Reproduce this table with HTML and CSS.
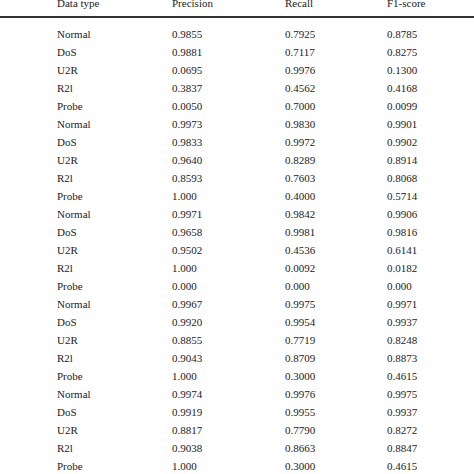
FILE: index.html
```html
<!DOCTYPE html>
<html>
<head>
<meta charset="utf-8">
<link rel="stylesheet" href="styles.css">
</head>
<body>
<div class="table">
  <div class="row head">
    <span>Data type</span><span>Precision</span><span>Recall</span><span>F1-score</span>
  </div>
  <div class="body">
    <div class="row"><span>Normal</span><span>0.9855</span><span>0.7925</span><span>0.8785</span></div>
    <div class="row"><span>DoS</span><span>0.9881</span><span>0.7117</span><span>0.8275</span></div>
    <div class="row"><span>U2R</span><span>0.0695</span><span>0.9976</span><span>0.1300</span></div>
    <div class="row"><span>R2l</span><span>0.3837</span><span>0.4562</span><span>0.4168</span></div>
    <div class="row"><span>Probe</span><span>0.0050</span><span>0.7000</span><span>0.0099</span></div>
    <div class="row"><span>Normal</span><span>0.9973</span><span>0.9830</span><span>0.9901</span></div>
    <div class="row"><span>DoS</span><span>0.9833</span><span>0.9972</span><span>0.9902</span></div>
    <div class="row"><span>U2R</span><span>0.9640</span><span>0.8289</span><span>0.8914</span></div>
    <div class="row"><span>R2l</span><span>0.8593</span><span>0.7603</span><span>0.8068</span></div>
    <div class="row"><span>Probe</span><span>1.000</span><span>0.4000</span><span>0.5714</span></div>
    <div class="row"><span>Normal</span><span>0.9971</span><span>0.9842</span><span>0.9906</span></div>
    <div class="row"><span>DoS</span><span>0.9658</span><span>0.9981</span><span>0.9816</span></div>
    <div class="row"><span>U2R</span><span>0.9502</span><span>0.4536</span><span>0.6141</span></div>
    <div class="row"><span>R2l</span><span>1.000</span><span>0.0092</span><span>0.0182</span></div>
    <div class="row"><span>Probe</span><span>0.000</span><span>0.000</span><span>0.000</span></div>
    <div class="row"><span>Normal</span><span>0.9967</span><span>0.9975</span><span>0.9971</span></div>
    <div class="row"><span>DoS</span><span>0.9920</span><span>0.9954</span><span>0.9937</span></div>
    <div class="row"><span>U2R</span><span>0.8855</span><span>0.7719</span><span>0.8248</span></div>
    <div class="row"><span>R2l</span><span>0.9043</span><span>0.8709</span><span>0.8873</span></div>
    <div class="row"><span>Probe</span><span>1.000</span><span>0.3000</span><span>0.4615</span></div>
    <div class="row"><span>Normal</span><span>0.9974</span><span>0.9976</span><span>0.9975</span></div>
    <div class="row"><span>DoS</span><span>0.9919</span><span>0.9955</span><span>0.9937</span></div>
    <div class="row"><span>U2R</span><span>0.8817</span><span>0.7790</span><span>0.8272</span></div>
    <div class="row"><span>R2l</span><span>0.9038</span><span>0.8663</span><span>0.8847</span></div>
    <div class="row"><span>Probe</span><span>1.000</span><span>0.3000</span><span>0.4615</span></div>
  </div>
</div>
</body>
</html>
```

FILE: styles.css
```css
html, body {
  margin: 0;
  padding: 0;
  background: #fff;
}
body {
  width: 474px;
  height: 474px;
  overflow: hidden;
  font-family: "Liberation Serif", "Times New Roman", serif;
  font-size: 11px;
  color: #222;
}
.row {
  display: grid;
  grid-template-columns: 115px 113px 102px 1fr;
  padding-left: 57px;
  line-height: 18px;
  height: 18px;
  white-space: nowrap;
}
.head {
  line-height: 14px;
  height: 14px;
  margin-top: -4px;
  padding-bottom: 6px;
  border-bottom: 2px solid #333;
}
.body {
  padding-top: 7px;
}
```
